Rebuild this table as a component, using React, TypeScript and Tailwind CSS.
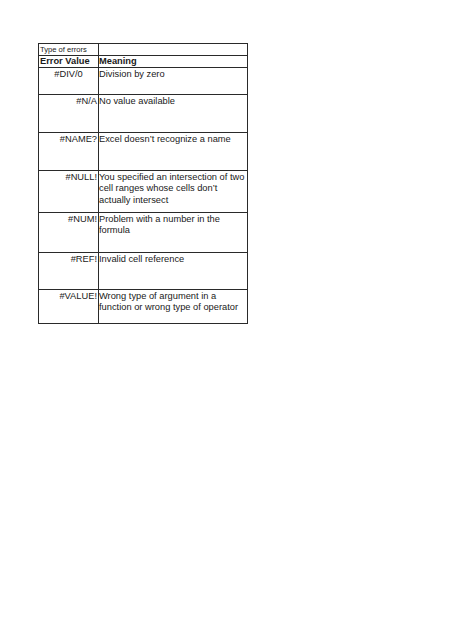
import React from "react";

const rows: { code: string; meaning: string[]; h: string }[] = [
  { code: "#DIV/0", meaning: ["Division by zero"], h: "h-[27px]" },
  { code: "#N/A", meaning: ["No value available"], h: "h-[38px]" },
  { code: "#NAME?", meaning: ["Excel doesn’t recognize a name"], h: "h-[38px]" },
  {
    code: "#NULL!",
    meaning: ["You specified an intersection of two", "cell ranges whose cells don’t", "actually intersect"],
    h: "h-[42px]",
  },
  { code: "#NUM!", meaning: ["Problem with a number in the", "formula"], h: "h-[40px]" },
  { code: "#REF!", meaning: ["Invalid cell reference"], h: "h-[37px]" },
  { code: "#VALUE!", meaning: ["Wrong type of argument in a", "function or wrong type of operator"], h: "h-[34px]" },
];

export default function App() {
  return (
    <div className="w-[474px] h-[632px] bg-white pt-[43px] pl-[38px]" style={{ fontFamily: '"Liberation Sans", Arial, sans-serif' }}>
      <div className="grid grid-cols-[60px_149px] w-[210px] border-l border-t border-[#2a2a2a] text-[#1a1a1a]">
        <div className="h-[12px] border-r border-b border-[#2a2a2a] pl-[1px] text-[7.6px] leading-[11px] whitespace-nowrap">Type of errors</div>
        <div className="h-[12px] border-r border-b border-[#2a2a2a]"></div>
        <div className="h-[12px] border-r border-b border-[#2a2a2a] pl-[1px] text-[9.3px] leading-[11px] font-bold whitespace-nowrap">Error Value</div>
        <div className="h-[12px] border-r border-b border-[#2a2a2a] text-[9.3px] leading-[11px] font-bold whitespace-nowrap">Meaning</div>
        {rows.map((r, i) => (
          <React.Fragment key={i}>
            <div
              className={
                i === 0
                  ? `${r.h} border-r border-b border-[#2a2a2a] pt-[1px] text-center text-[9.3px] leading-[11.3px] whitespace-nowrap`
                  : `${r.h} border-r border-b border-[#2a2a2a] pr-[1px] pt-[1px] text-right text-[9.3px] leading-[11.3px] whitespace-nowrap`
              }
            >
              {r.code}
            </div>
            <div className={`${r.h} border-r border-b border-[#2a2a2a] pt-[1px] text-[9.3px] leading-[11.3px]`}>
              {r.meaning.map((m, j) => (
                <div key={j} className="whitespace-nowrap">{m}</div>
              ))}
            </div>
          </React.Fragment>
        ))}
      </div>
    </div>
  );
}
